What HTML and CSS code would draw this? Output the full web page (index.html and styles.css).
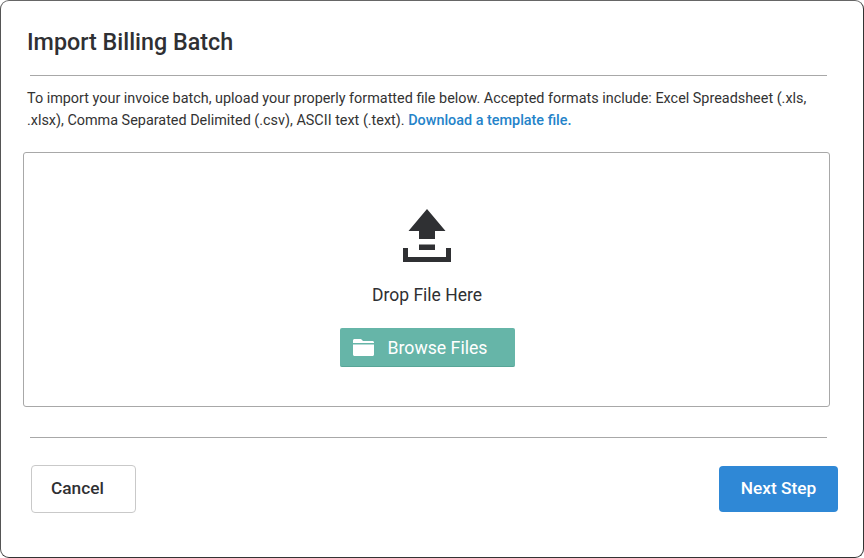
FILE: index.html
```html
<!DOCTYPE html>
<html lang="en">
<head>
<meta charset="utf-8">
<title>Import Billing Batch</title>
<link rel="stylesheet" href="styles.css">
</head>
<body>
<div class="modal">
  <h1 class="title">Import Billing Batch</h1>
  <hr class="rule rule-top">
  <p class="intro">To import your invoice batch, upload your properly formatted file below. Accepted formats include: Excel Spreadsheet (.xls, .xlsx), Comma Separated Delimited (.csv), ASCII text (.text). <a class="link" href="#">Download a template file.</a></p>
  <section class="drop">
    <svg class="upload" width="48" height="53" viewBox="0 0 48 53" aria-hidden="true">
      <path d="M24 0 42.500 22H32V30H16V22H5.500Z" fill="#2f3033"/>
      <rect x="16" y="35.500" width="16" height="5.500" fill="#2f3033"/>
      <path d="M0 39H5V48H43V39H48V53H0Z" fill="#2f3033"/>
    </svg>
    <div class="drop-label">Drop File Here</div>
    <button class="browse" type="button">
      <svg class="folder" width="21" height="17" viewBox="0 0 21 17" aria-hidden="true">
        <path d="M0 1.500C0 .7.700 0 1.500 0H8L10 2H19.500C20.300 2 21 2.700 21 3.500V4H0Z" fill="#fff"/>
        <path d="M0 5.500H21V15.500C21 16.300 20.300 17 19.500 17H1.500C.7 17 0 16.300 0 15.500Z" fill="#fff"/>
      </svg>
      <span>Browse Files</span>
    </button>
  </section>
  <hr class="rule rule-bottom">
  <footer class="actions">
    <button class="btn cancel" type="button">Cancel</button>
    <button class="btn next" type="button">Next Step</button>
  </footer>
</div>
</body>
</html>
```
FILE: styles.css
```css
* { box-sizing: border-box; }
html, body { margin: 0; padding: 0; background: #fff; }
body { width: 864px; height: 558px; overflow: hidden; font-family: Roboto, "Liberation Sans", sans-serif; color: #2f3033; }
.modal { width: 864px; height: 558px; border: 1px solid #333; border-top-color: #666; border-left-color: #555; border-radius: 9px; padding: 0 25px 0 22px; background: #fff; display: flex; flex-direction: column; }
.title { margin: 27px 0 0 4px; font-size: 23.300px; line-height: 28px; font-weight: 500; color: #2f3033; }
.rule { border: 0; height: 1px; background: #a8a8a8; margin: 0 0 0 7px; width: 797px; flex: none; }
.rule-top { margin-top: 19px; }
.rule-bottom { margin-top: 30px; }
.intro { margin: 12px 0 0 4px; width: 800px; font-size: 14.400px; line-height: 22px; color: #333; }
.link { color: #2483c9; font-weight: 500; text-decoration: none; }
.drop { margin-top: 20px; width: 807px; height: 255px; border: 1px solid #a8a8a8; border-radius: 3px; display: flex; flex-direction: column; align-items: center; padding: 56px 0 0 1px; }
.upload { display: block; }
.drop-label { margin-top: 22px; font-size: 17.500px; line-height: 22px; color: #2f3033; }
.browse { margin-top: 22px; width: 175px; height: 39px; border: 0; border-bottom: 1px solid #57a597; border-radius: 2px; background: #66b5a8; color: #fff; font: 400 17.700px Roboto, sans-serif; display: flex; align-items: center; padding: 2px 0 0 13px; gap: 14px; }
.folder { margin-top: -2px; }
.actions { margin-top: 27px; padding-left: 8px; display: flex; justify-content: space-between; align-items: flex-start; }
.btn { border-radius: 4px; font: 500 17.300px Roboto, sans-serif; padding-bottom: 3px; }
.cancel { width: 105px; height: 48px; background: #fff; border: 1px solid #c9c9c9; color: #2f3033; text-align: left; padding-left: 19px; }
.next { width: 119px; height: 46px; margin-top: 1px; background: #2f88d6; border: 0; color: #fff; }
```
